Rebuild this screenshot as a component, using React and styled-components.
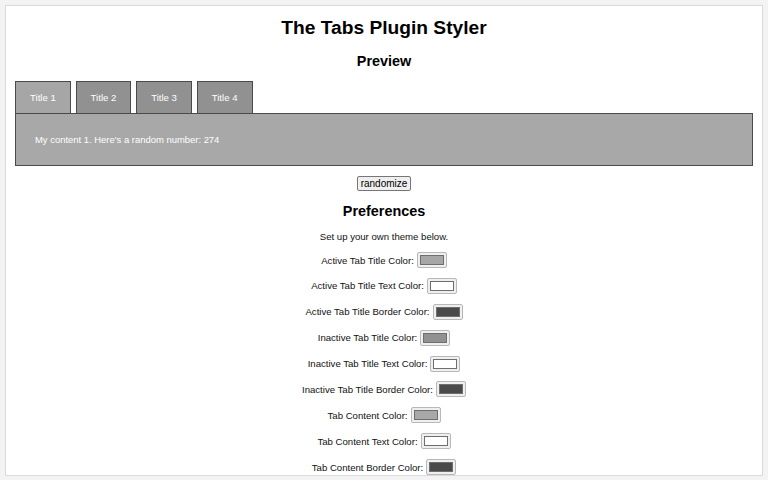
import React, { useState } from "react";
import styled, { createGlobalStyle } from "styled-components";

const GlobalStyle = createGlobalStyle`
  html, body {
    margin: 0;
    padding: 0;
    background: #f3f3f3;
    overflow: hidden;
  }
  body {
    font-family: "Liberation Sans", Arial, sans-serif;
  }
  #root {
    box-sizing: border-box;
    padding: 5px;
    height: 480px;
  }
`;

const Card = styled.main`
  box-sizing: border-box;
  height: 471px;
  padding: 0 9px;
  background: #fff;
  border: 1px solid #dadada;
  overflow: hidden;
  text-align: center;
  color: #111;
`;

const Title = styled.h1`
  margin: 11px 0 0;
  font-size: 19.2px;
  line-height: 22px;
  font-weight: 700;
  color: #000;
`;

const SectionTitle = styled.h2`
  margin: ${(p) => p.$top}px 0 0;
  font-size: 14.4px;
  line-height: 17px;
  font-weight: 700;
  color: #000;
`;

const TabBar = styled.div`
  display: flex;
  gap: 4.8px;
  margin-top: 11.5px;
`;

const Tab = styled.button`
  box-sizing: border-box;
  height: 32px;
  margin: 0;
  padding: 0 14px;
  font-family: inherit;
  font-size: 9.6px;
  line-height: 11px;
  color: ${(p) => p.$text};
  background: ${(p) => p.$bg};
  border: 1px solid ${(p) => p.$border};
  border-bottom: none;
  border-radius: 0;
  cursor: pointer;
`;

const Panel = styled.div`
  padding: 20px 19px;
  text-align: left;
  font-size: 9.45px;
  line-height: 11px;
  color: ${(p) => p.$text};
  background: ${(p) => p.$bg};
  border: 1px solid ${(p) => p.$border};
`;

const ActionButton = styled.button`
  margin: 10px 0 0;
  padding: 1px 2.5px;
  font-family: inherit;
  font-size: 10px;
  line-height: 11px;
  color: #000;
  background: #efefef;
  border: 1px solid #767676;
  border-radius: 2px;
  cursor: pointer;
`;

const Intro = styled.p`
  margin: 11px 0 0;
  font-size: 9.6px;
  line-height: 11px;
`;

const PrefRow = styled.label`
  display: flex;
  justify-content: center;
  align-items: center;
  gap: 3px;
  height: 17px;
  margin-top: ${(p) => (p.$first ? 10 : 8.9)}px;
  font-size: 9.6px;
`;

const Swatch = styled.input.attrs({ type: "color" })`
  box-sizing: border-box;
  width: 30px;
  height: 16px;
  margin: 0;
  padding: 2px;
  background: #efefef;
  border: 1px solid #b8b8b8;
  border-radius: 2px;
  cursor: pointer;

  &::-webkit-color-swatch-wrapper {
    padding: 0;
  }
  &::-webkit-color-swatch {
    border: 1px solid #6e6e6e;
    border-radius: 0;
  }
`;

const PREFS = [
  { key: "activeBg", label: "Active Tab Title Color" },
  { key: "activeText", label: "Active Tab Title Text Color" },
  { key: "activeBorder", label: "Active Tab Title Border Color" },
  { key: "inactiveBg", label: "Inactive Tab Title Color" },
  { key: "inactiveText", label: "Inactive Tab Title Text Color" },
  { key: "inactiveBorder", label: "Inactive Tab Title Border Color" },
  { key: "contentBg", label: "Tab Content Color" },
  { key: "contentText", label: "Tab Content Text Color" },
  { key: "contentBorder", label: "Tab Content Border Color" },
];

const TABS = ["Title 1", "Title 2", "Title 3", "Title 4"];

export default function App() {
  const [active, setActive] = useState(0);
  const [number, setNumber] = useState(274);
  const [theme, setTheme] = useState({
    activeBg: "#a6a6a6",
    activeText: "#ffffff",
    activeBorder: "#4a4a4a",
    inactiveBg: "#919191",
    inactiveText: "#ffffff",
    inactiveBorder: "#4a4a4a",
    contentBg: "#a8a8a8",
    contentText: "#ffffff",
    contentBorder: "#4a4a4a",
  });

  return (
    <>
      <GlobalStyle />
      <Card>
        <Title>The Tabs Plugin Styler</Title>
        <SectionTitle $top={13.5}>Preview</SectionTitle>
        <TabBar>
          {TABS.map((t, i) => {
            const on = i === active;
            return (
              <Tab
                key={t}
                onClick={() => setActive(i)}
                $bg={on ? theme.activeBg : theme.inactiveBg}
                $text={on ? theme.activeText : theme.inactiveText}
                $border={on ? theme.activeBorder : theme.inactiveBorder}
              >
                {t}
              </Tab>
            );
          })}
        </TabBar>
        <Panel $bg={theme.contentBg} $text={theme.contentText} $border={theme.contentBorder}>
          My content {active + 1}. Here's a random number: {number}
        </Panel>
        <ActionButton onClick={() => setNumber(Math.floor(Math.random() * 1000))}>
          randomize
        </ActionButton>
        <SectionTitle $top={11.5}>Preferences</SectionTitle>
        <Intro>Set up your own theme below.</Intro>
        {PREFS.map((p, i) => (
          <PrefRow key={p.key} $first={i === 0}>
            {p.label}:
            <Swatch
              value={theme[p.key]}
              onChange={(e) => setTheme({ ...theme, [p.key]: e.target.value })}
            />
          </PrefRow>
        ))}
      </Card>
    </>
  );
}
